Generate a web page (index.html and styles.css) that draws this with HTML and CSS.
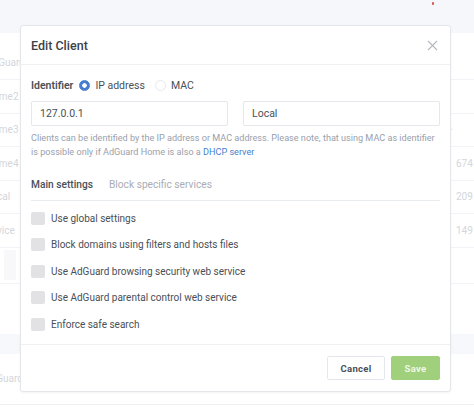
FILE: index.html
```html
<!DOCTYPE html>
<html lang="en">
<head>
<meta charset="utf-8">
<title>Edit Client</title>
<link rel="stylesheet" href="styles.css">
</head>
<body>
<div class="page">
  <div class="topbar"><span class="dot"></span></div>
  <div class="table">
    <div class="trow first"><span class="cell-l">AdGuard</span><span class="cell-r"></span></div>
    <div class="trow"><span class="cell-l">Home2</span><span class="cell-r"></span></div>
    <div class="trow"><span class="cell-l">Home3</span><span class="cell-r dash">–</span></div>
    <div class="trow"><span class="cell-l">Home4</span><span class="cell-r">674</span></div>
    <div class="trow"><span class="cell-l">Local</span><span class="cell-r">209</span></div>
    <div class="trow"><span class="cell-l">device</span><span class="cell-r">149</span></div>
    <div class="pager"><span class="pager-box"></span></div>
    <div class="spacer"></div>
    <div class="band"></div>
    <div class="trow tall"><span class="cell-l last">AdGuard</span><span class="cell-r"></span></div>
  </div>
</div>

<div class="modal">
  <div class="modal-header">
    <h2 class="modal-title">Edit Client</h2>
    <svg class="close" width="11" height="11" viewBox="0 0 11 11"><path d="M1 1L10 10M10 1L1 10" stroke="#b3b8bf" stroke-width="1.1" fill="none"/></svg>
  </div>
  <div class="modal-body">
    <div class="ident">
      <span class="ident-label">Identifier</span>
      <label class="radio"><span class="radio-dot checked"></span>IP address</label>
      <label class="radio"><span class="radio-dot"></span>MAC</label>
    </div>
    <div class="inputs">
      <div class="input">127.0.0.1</div>
      <div class="input">Local</div>
    </div>
    <p class="help">Clients can be identified by the IP address or MAC address. Please note, that using MAC as identifier is possible only if AdGuard Home is also a <a href="#" class="link">DHCP server</a></p>
    <div class="tabs">
      <span class="tab active">Main settings</span>
      <span class="tab">Block specific services</span>
    </div>
    <div class="checks">
      <label class="check"><span class="box"></span>Use global settings</label>
      <label class="check"><span class="box"></span>Block domains using filters and hosts files</label>
      <label class="check"><span class="box"></span>Use AdGuard browsing security web service</label>
      <label class="check"><span class="box"></span>Use AdGuard parental control web service</label>
      <label class="check"><span class="box"></span>Enforce safe search</label>
    </div>
  </div>
  <div class="modal-footer">
    <button class="btn btn-cancel">Cancel</button>
    <button class="btn btn-save">Save</button>
  </div>
</div>
</body>
</html>
```

FILE: styles.css
```css
* { box-sizing: border-box; }
html, body {
  margin: 0;
  padding: 0;
  width: 474px;
  height: 412px;
  overflow: hidden;
  background: #ffffff;
  font-family: Roboto, "Liberation Sans", Arial, sans-serif;
}

.page {
  width: 474px;
  height: 412px;
  position: relative;
}
.topbar {
  height: 33px;
  background: #f6f7fb;
  display: flex;
  justify-content: flex-end;
  padding-right: 40px;
}
.dot {
  width: 2px;
  height: 3px;
  margin-top: 2px;
  background: #d9534f;
  border-radius: 1px;
}
.table {
  display: flex;
  flex-direction: column;
}
.trow {
  height: 33.5px;
  display: flex;
  justify-content: space-between;
  align-items: center;
  border-bottom: 1px solid #f2f3f6;
  font-size: 10px;
  color: #d3d6db;
}
.trow.first { margin-top: 13px; height: 34px; }
.trow.tall { height: 51px; border-bottom: 1px solid #eef0f3; }
.cell-l { margin-left: -14px; }
.cell-l.last { margin-left: -16px; }
.cell-r { width: 18px; text-align: left; }
.cell-r.dash { width: 28px; }
.pager {
  height: 36px;
  display: flex;
  align-items: center;
  border-bottom: 1px solid #f2f3f6;
}
.pager-box {
  width: 12px;
  height: 30px;
  margin-left: 4px;
  background: #f8f8fa;
}
.spacer { height: 50px; }
.band {
  height: 20px;
  background: #f6f8fc;
}

.modal {
  position: absolute;
  left: 20px;
  top: 25px;
  width: 431px;
  height: 367px;
  background: #fff;
  border: 1px solid #e4e6ea;
  border-radius: 3px;
  box-shadow: 0 1px 3px rgba(0,0,0,0.05);
  display: flex;
  flex-direction: column;
  color: #495057;
}
.modal-header {
  height: 39px;
  flex: none;
  display: flex;
  align-items: center;
  justify-content: space-between;
  padding: 0 12px 0 10px;
  border-bottom: 1px solid #eef0f2;
}
.modal-title {
  margin: 0;
  font-size: 12.5px;
  font-weight: 500;
  color: #3d4247;
}
.close { display: block; }

.modal-body {
  flex: 1;
  padding: 10px 10px 0 10px;
}
.ident {
  height: 20px;
  display: flex;
  align-items: center;
  font-size: 10.5px;
}
.ident-label {
  font-weight: 600;
  color: #495057;
  margin-right: 6px;
}
.radio {
  display: flex;
  align-items: center;
  margin-right: 10px;
  color: #495057;
}
.radio-dot {
  width: 11px;
  height: 11px;
  border-radius: 50%;
  border: 1px solid #e6e8ec;
  background: #fff;
  margin-right: 5px;
}
.radio-dot.checked {
  border-color: #467fcf;
  background: radial-gradient(circle, #fff 0 2px, #467fcf 2.5px);
}

.inputs {
  margin-top: 6px;
  display: grid;
  grid-template-columns: 1fr 1fr;
  column-gap: 15px;
}
.input {
  height: 25px;
  border: 1px solid #e4e7eb;
  border-radius: 2px;
  display: flex;
  align-items: center;
  padding-left: 8px;
  font-size: 10.5px;
  color: #495057;
}
.help {
  margin: 5px 0 0 0;
  font-size: 9.1px;
  line-height: 14px;
  color: #9aa0ac;
}
.link { color: #467fcf; text-decoration: none; }

.tabs {
  margin-top: 14px;
  height: 28px;
  display: flex;
  align-items: flex-start;
  padding-top: 6px;
  border-bottom: 1px solid #e9ecef;
  font-size: 10.2px;
}
.tab {
  color: #a8adb5;
  margin-right: 16px;
}
.tab.active {
  color: #495057;
  font-weight: 500;
}

.checks {
  margin-top: 4px;
  display: flex;
  flex-direction: column;
}
.check {
  height: 26.5px;
  display: flex;
  align-items: center;
  font-size: 10px;
  color: #495057;
}
.box {
  width: 14px;
  height: 13px;
  border-radius: 2px;
  background: #e2e2e4;
  margin-right: 6px;
}

.modal-footer {
  flex: none;
  height: 47px;
  border-top: 1px solid #eef0f2;
  display: flex;
  justify-content: flex-end;
  align-items: center;
  gap: 6px;
  padding-right: 10px;
}
.btn {
  height: 24px;
  border-radius: 2px;
  font-family: inherit;
  font-size: 9.5px;
  font-weight: 700;
  letter-spacing: 0.3px;
  padding: 0;
  cursor: pointer;
}
.btn-cancel {
  width: 58px;
  background: #fff;
  border: 1px solid #e4e7eb;
  color: #495057;
}
.btn-save {
  width: 49px;
  background: #a0d07b;
  border: 1px solid #a0d07b;
  color: #eef7e6;
}
```
